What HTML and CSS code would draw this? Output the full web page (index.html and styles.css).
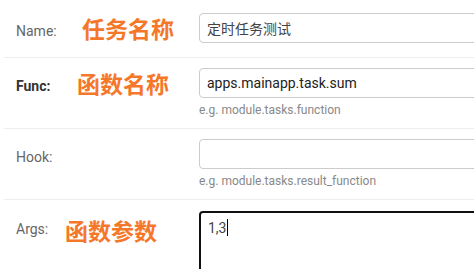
FILE: index.html
```html
<!DOCTYPE html>
<html lang="zh-CN">
<head>
    <meta charset="UTF-8">
    <meta name="viewport" content="width=device-width, initial-scale=1.0">
    <title>Task</title>
    <link rel="stylesheet" href="styles.css">
</head>
<body>
    <div class="form">
        <!-- Name -->
        <div class="form-row first">
            <label for="id_name">Name:</label>
            <span class="note note-name">任务名称</span>
            <div class="field">
                <input type="text" id="id_name" value="定时任务测试">
            </div>
        </div>

        <!-- Func -->
        <div class="form-row">
            <label for="id_func" class="required">Func:</label>
            <span class="note note-func">函数名称</span>
            <div class="field">
                <input type="text" id="id_func" class="dark" value="apps.mainapp.task.sum">
                <div class="help">e.g. module.tasks.function</div>
            </div>
        </div>

        <!-- Hook -->
        <div class="form-row">
            <label for="id_hook">Hook:</label>
            <div class="field">
                <input type="text" id="id_hook">
                <div class="help">e.g. module.tasks.result_function</div>
            </div>
        </div>

        <!-- Args -->
        <div class="form-row last">
            <label for="id_args">Args:</label>
            <span class="note note-args">函数参数</span>
            <div class="field">
                <div class="textarea">1,3<span class="caret"></span></div>
            </div>
        </div>
    </div>
</body>
</html>
```

FILE: styles.css
```css
html, body {
    height: 100%;
    overflow: hidden;
}

body {
    font-family: Roboto, "Noto Sans CJK SC", sans-serif;
    background-color: #fff;
    color: #333;
    margin: 0;
}

.form {
    margin-left: 4px;
    height: 100%;
    overflow: hidden;
}

.form-row {
    position: relative;
    display: flex;
    padding: 10px 0 10px 12px;
    border-bottom: 1px solid #eee;
}

.form-row.first {
    padding-top: 13px;
    padding-bottom: 14px;
}

.form-row.last {
    border-bottom: none;
    padding-top: 11px;
}

label {
    width: 183px;
    flex-shrink: 0;
    padding-top: 8px;
    font-size: 14px;
    line-height: 20px;
    color: #666;
}

label.required {
    font-weight: bold;
    color: #333;
}

.field {
    flex: 1;
    min-width: 0;
    margin-right: -20px;
}

input {
    display: block;
    box-sizing: border-box;
    width: 100%;
    height: 30px;
    margin: 0;
    padding: 0 7px;
    border: 1px solid #ccc;
    border-radius: 4px;
    font-family: Roboto, "Noto Sans CJK SC", sans-serif;
    font-size: 14px;
    color: #444;
    background: #fff;
}

input.dark {
    color: #222;
}

.help {
    margin-top: 4px;
    font-size: 12px;
    line-height: 16px;
    color: #888;
}

.textarea {
    box-sizing: border-box;
    height: 64px;
    padding: 5px 7px;
    border: 2px solid #111;
    border-bottom: none;
    border-radius: 4px 4px 0 0;
    font-size: 14px;
    line-height: 20px;
    color: #444;
}

.caret {
    display: inline-block;
    width: 1px;
    height: 17px;
    vertical-align: -3px;
    background: #000;
}

.note {
    position: absolute;
    font-family: "Noto Sans CJK SC", sans-serif;
    font-size: 23px;
    font-weight: bold;
    line-height: 1;
    color: #f5782a;
}

.note-name {
    left: 78px;
    top: 17px;
}

.note-func {
    left: 73px;
    top: 14px;
}

.note-args {
    left: 61px;
    top: 19px;
}
```
